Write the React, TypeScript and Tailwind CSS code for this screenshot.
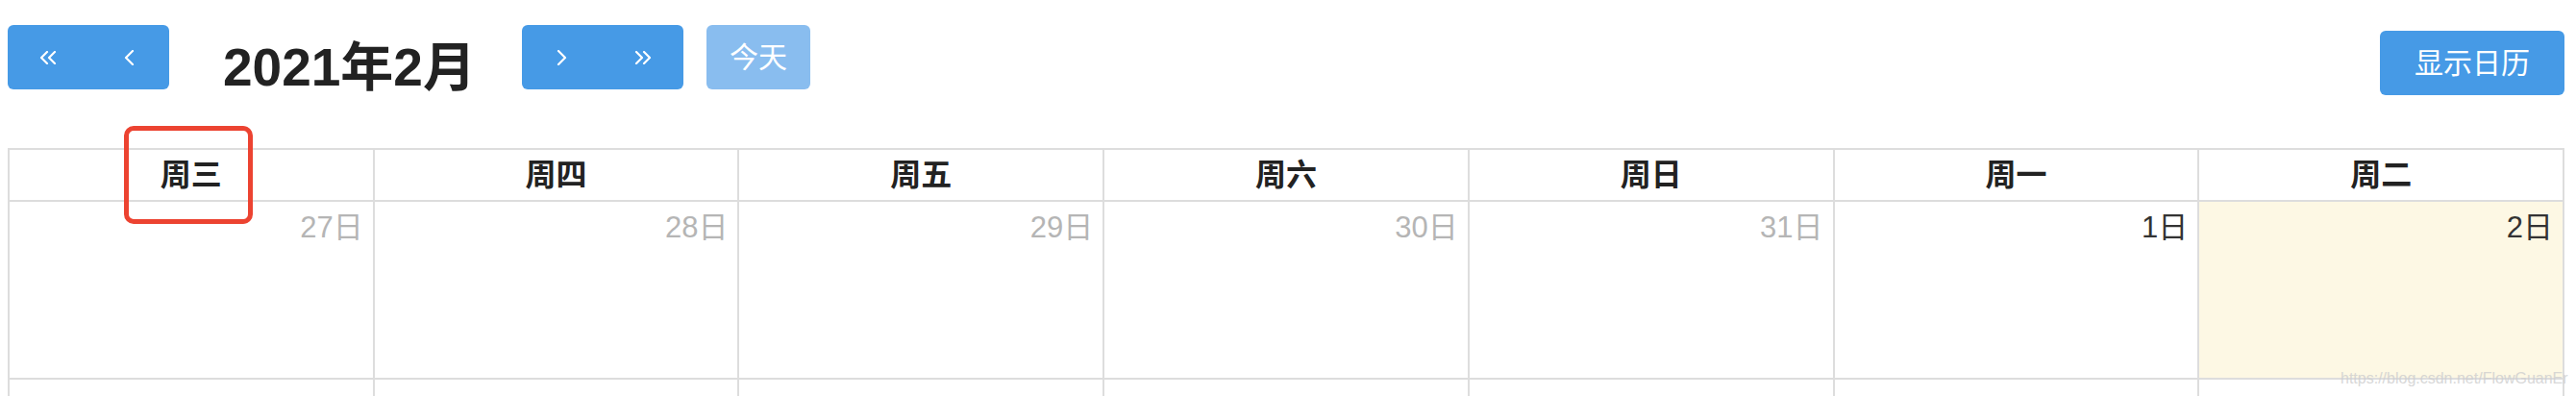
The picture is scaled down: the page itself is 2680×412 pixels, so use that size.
import React from "react";

const weekDays = ["周三", "周四", "周五", "周六", "周日", "周一", "周二"];

type Day = { label: string; other?: boolean; today?: boolean };

const rows: Day[][] = [
  [
    { label: "27日", other: true },
    { label: "28日", other: true },
    { label: "29日", other: true },
    { label: "30日", other: true },
    { label: "31日", other: true },
    { label: "1日" },
    { label: "2日", today: true },
  ],
  // next week, only its top edge shows
  Array.from({ length: 7 }, () => ({ label: "" })),
];

function Chevron({ dir, double }: { dir: "left" | "right"; double?: boolean }) {
  if (!double) {
    const d = dir === "left" ? "M9 1 L2 8 L9 15" : "M2 1 L9 8 L2 15";
    return (
      <svg width="11" height="16" viewBox="0 0 11 16" fill="none">
        <path d={d} stroke="white" strokeWidth="2.2" strokeLinecap="round" strokeLinejoin="round" />
      </svg>
    );
  }
  const a = dir === "left" ? "M8 1 L2 7 L8 13" : "M2 1 L8 7 L2 13";
  const b = dir === "left" ? "M16 1 L10 7 L16 13" : "M10 1 L16 7 L10 13";
  return (
    <svg width="18" height="14" viewBox="0 0 18 14" fill="none">
      <path d={a} stroke="white" strokeWidth="2.2" strokeLinecap="round" strokeLinejoin="round" />
      <path d={b} stroke="white" strokeWidth="2.2" strokeLinecap="round" strokeLinejoin="round" />
    </svg>
  );
}

function NavGroup({ side }: { side: "prev" | "next" }) {
  const left = side === "prev";
  return (
    <div className="flex h-[67px] w-[168px] overflow-hidden rounded-[6px] bg-[#469ae6]">
      <button className="flex flex-1 items-center justify-center">
        <Chevron dir={left ? "left" : "right"} double={left} />
      </button>
      <button className="flex flex-1 items-center justify-center">
        <Chevron dir={left ? "left" : "right"} double={!left} />
      </button>
    </div>
  );
}

export default function App() {
  return (
    <div
      className="relative min-h-[412px] bg-white px-[8px] pt-[26px]"
      style={{ fontFamily: '"Liberation Sans", "Noto Sans CJK SC", sans-serif' }}
    >
      {/* toolbar */}
      <div className="flex h-[67px] w-[2660px] items-start">
        <NavGroup side="prev" />
        <h2 className="ml-[56px] mt-[17px] text-[55px] font-bold leading-[54px] text-[#222]">
          2021年2月
        </h2>
        <div className="ml-[48px]">
          <NavGroup side="next" />
        </div>
        <button className="ml-[24px] h-[67px] w-[108px] rounded-[6px] bg-[#89bdef] text-[30px] text-white">
          今天
        </button>
        <button className="ml-auto mt-[6px] h-[67px] w-[192px] rounded-[6px] bg-[#469ae6] text-[30px] text-white">
          显示日历
        </button>
      </div>

      {/* month grid */}
      <div className="mt-[61px] w-[2660px] border-l-2 border-t-2 border-[#ddd]">
        <div className="grid grid-cols-7">
          {weekDays.map((d) => (
            <div
              key={d}
              className="flex h-[54px] items-center justify-center border-b-2 border-r-2 border-[#ddd] text-[32px] font-bold text-[#222]"
            >
              {d}
            </div>
          ))}
        </div>
        {rows.map((row, i) => (
          <div key={i} className="grid grid-cols-7">
            {row.map((day, j) => (
              <div
                key={j}
                className={
                  "h-[185px] border-b-2 border-r-2 border-[#ddd] pr-[10px] pt-[10px] text-right text-[31px] leading-[34px] " +
                  (day.today ? "bg-[#fdf8e4] " : "") +
                  (day.other ? "text-[#b5b5b5]" : "text-[#333]")
                }
              >
                {day.label}
              </div>
            ))}
          </div>
        ))}
      </div>

      {/* annotation + watermark overlays */}
      <div className="pointer-events-none absolute left-[129px] top-[131px] h-[102px] w-[134px] rounded-[10px] border-[5px] border-[#ec4331]" />
      <div className="pointer-events-none absolute left-[2435px] top-[382px] whitespace-nowrap text-[16px] text-[#cfcfcf] opacity-80">
        https://blog.csdn.net/FlowGuanEr
      </div>
    </div>
  );
}
